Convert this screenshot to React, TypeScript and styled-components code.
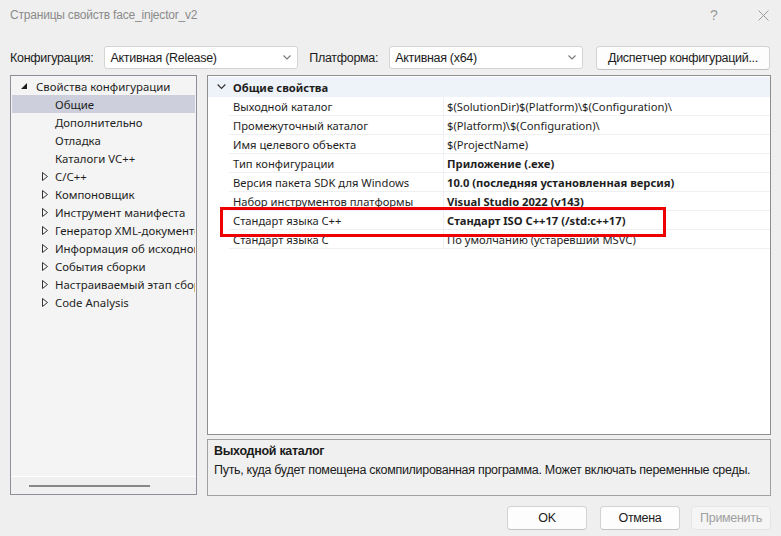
import React from 'react';
import styled, { createGlobalStyle } from 'styled-components';

const GlobalStyle = createGlobalStyle`
  html, body {
    margin: 0;
    padding: 0;
    background: #efefef;
  }
  * {
    box-sizing: border-box;
  }
`;

const uiFont = `"Liberation Sans", Arial, sans-serif`;
const gridFont = `"Noto Sans", "Open Sans", sans-serif`;

const Window = styled.div`
  width: 781px;
  height: 536px;
  display: flex;
  flex-direction: column;
  background: #efefef;
  font-family: ${uiFont};
  font-size: 12px;
  color: #1b1b1b;
  overflow: hidden;
`;

const TitleBar = styled.div`
  height: 30px;
  display: flex;
  align-items: center;
  padding: 0 0 0 10px;
  color: #8b8b8b;
  font-size: 12px;
`;

const TitleText = styled.div`
  flex: 1;
  letter-spacing: -0.2px;
`;

const TitleButton = styled.div<{ $w: number; $gap?: number }>`
  width: ${(p) => p.$w}px;
  margin-left: ${(p) => p.$gap ?? 0}px;
  height: 30px;
  display: flex;
  align-items: center;
  justify-content: center;
  color: #9a9a9a;
  font-size: 14px;
`;

const Toolbar = styled.div`
  display: flex;
  align-items: center;
  padding: 10px 11px 0 10px;
  height: 45px;
`;

const Label = styled.span`
  font-size: 12.5px;
  letter-spacing: -0.3px;
  margin-right: 11px;
`;

const Select = styled.div<{ $width: number }>`
  width: ${(p) => p.$width}px;
  height: 23px;
  display: flex;
  align-items: center;
  justify-content: space-between;
  padding: 0 6px 0 5px;
  background: #ffffff;
  border: 1px solid #d4d4d4;
  border-radius: 3px;
  font-size: 12.5px;
  letter-spacing: -0.3px;
  margin-right: 11px;
`;

const ToolButton = styled.button<{ $disabled?: boolean }>`
  height: 24px;
  padding: 0 10px;
  background: ${(p) => (p.$disabled ? '#f5f5f5' : '#fdfdfd')};
  border: 1px solid ${(p) => (p.$disabled ? '#e6e6e6' : '#d3d3d3')};
  border-bottom-color: ${(p) => (p.$disabled ? '#e6e6e6' : '#c2c2c2')};
  border-radius: 4px;
  font-family: ${uiFont};
  font-size: 12.5px;
  letter-spacing: -0.3px;
  color: ${(p) => (p.$disabled ? '#a0a0a0' : '#1b1b1b')};
`;

const Main = styled.div`
  display: flex;
  gap: 10px;
  padding: 0 10px 0 10px;
  height: 421px;
`;

const TreePanel = styled.div`
  width: 187px;
  height: 420px;
  display: flex;
  flex-direction: column;
  border: 1px solid #8e8e98;
  background: #f4f4f4;
  font-family: ${gridFont};
  font-size: 11.4px;
`;

const TreeList = styled.div`
  flex: 1;
  padding-top: 1px;
  overflow: hidden;
`;

const TreeRow = styled.div<{ $level: number; $selected?: boolean }>`
  height: 18px;
  display: flex;
  align-items: center;
  white-space: nowrap;
  overflow: hidden;
  padding-left: ${(p) => (p.$level === 0 ? 7 : 26)}px;
  margin: 0 1px;
  background: ${(p) => (p.$selected ? '#cdd0dc' : 'transparent')};
  color: #1e1e1e;
`;

const Expander = styled.span<{ $root?: boolean }>`
  width: 17px;
  height: 18px;
  display: flex;
  align-items: center;
  padding-left: ${(p) => (p.$root ? 2 : 4)}px;
  flex-shrink: 0;
`;

const ScrollBar = styled.div`
  height: 18px;
  border-top: 1px solid #ffffff;
  background: #f0f0f0;
  display: flex;
  align-items: center;
  padding-left: 18px;
`;

const ScrollThumb = styled.div`
  width: 121px;
  height: 2px;
  background: #888888;
`;

const RightColumn = styled.div`
  flex: 1;
  display: flex;
  flex-direction: column;
  gap: 4px;
`;

const Grid = styled.div`
  position: relative;
  height: 361px;
  border: 1px solid #8e8e8e;
  background: #ffffff;
  font-family: ${gridFont};
  font-size: 11.2px;
  padding-top: 1px;
`;

const GroupHeader = styled.div`
  height: 20px;
  display: flex;
  align-items: center;
  background: #eef3f9;
  font-weight: 700;
  color: #1e1e1e;
`;

const Chevron = styled.span`
  width: 25px;
  display: flex;
  justify-content: center;
  padding-left: 2px;
`;

const PropRow = styled.div`
  height: 19px;
  display: grid;
  grid-template-columns: 21px 214px 1fr;
  align-items: stretch;
`;

const Cell = styled.div<{ $bold?: boolean; $value?: boolean }>`
  display: flex;
  align-items: center;
  white-space: nowrap;
  overflow: hidden;
  padding-left: ${(p) => (p.$value ? 3 : 4)}px;
  border-bottom: 1px solid #f0f0f4;
  border-left: ${(p) => (p.$value ? '1px solid #f0f0f4' : 'none')};
  font-weight: ${(p) => (p.$bold ? 700 : 400)};
  color: #1e1e1e;
`;

const Highlight = styled.div`
  position: absolute;
  left: 12px;
  top: 131px;
  width: 446px;
  height: 30px;
  border: 3px solid #ee0000;
  pointer-events: none;
`;

const Description = styled.div`
  height: 57px;
  border: 1px solid #a0a0a0;
  background: #f0f0f0;
  padding: 2px 6px;
  font-size: 12.5px;
  letter-spacing: -0.3px;
  line-height: 18px;
`;

const DescTitle = styled.div`
  font-weight: 700;
  margin-bottom: 1px;
`;

const Footer = styled.div`
  display: flex;
  justify-content: flex-end;
  gap: 13px;
  padding: 10px 10px 0 0;
`;

const FooterButton = styled(ToolButton)`
  width: 80px;
  height: 24px;
  padding: 0;
  margin-left: ${(p) => (p.$disabled ? '-2px' : '0')};
`;

const FilledTriangle = () => (
  <svg width="7" height="7" viewBox="0 0 7 7">
    <polygon points="6,0 6,6 0,6" fill="#1e1e1e" />
  </svg>
);

const OpenTriangle = () => (
  <svg width="7" height="9" viewBox="0 0 7 9">
    <polygon points="0.5,0.5 5.5,4.5 0.5,8.5" fill="none" stroke="#333" strokeWidth="1" />
  </svg>
);

const DownChevron = ({ color = '#777', size = 8 }: { color?: string; size?: number }) => (
  <svg width={size} height={size / 2 + 1} viewBox="0 0 8 5">
    <polyline points="0.5,0.5 4,4 7.5,0.5" fill="none" stroke={color} strokeWidth="1.1" />
  </svg>
);

const treeItems: { label: string; level: number; expandable?: boolean; selected?: boolean }[] = [
  { label: 'Свойства конфигурации', level: 0 },
  { label: 'Общие', level: 1, selected: true },
  { label: 'Дополнительно', level: 1 },
  { label: 'Отладка', level: 1 },
  { label: 'Каталоги VC++', level: 1 },
  { label: 'C/C++', level: 1, expandable: true },
  { label: 'Компоновщик', level: 1, expandable: true },
  { label: 'Инструмент манифеста', level: 1, expandable: true },
  { label: 'Генератор XML-документов', level: 1, expandable: true },
  { label: 'Информация об исходном коде', level: 1, expandable: true },
  { label: 'События сборки', level: 1, expandable: true },
  { label: 'Настраиваемый этап сборки', level: 1, expandable: true },
  { label: 'Code Analysis', level: 1, expandable: true },
];

const properties: { name: string; value: string; bold?: boolean }[] = [
  { name: 'Выходной каталог', value: '$(SolutionDir)$(Platform)\\$(Configuration)\\' },
  { name: 'Промежуточный каталог', value: '$(Platform)\\$(Configuration)\\' },
  { name: 'Имя целевого объекта', value: '$(ProjectName)' },
  { name: 'Тип конфигурации', value: 'Приложение (.exe)', bold: true },
  { name: 'Версия пакета SDK для Windows', value: '10.0 (последняя установленная версия)', bold: true },
  { name: 'Набор инструментов платформы', value: 'Visual Studio 2022 (v143)', bold: true },
  { name: 'Стандарт языка C++', value: 'Стандарт ISO C++17 (/std:c++17)', bold: true },
  { name: 'Стандарт языка C', value: 'По умолчанию (устаревший MSVC)' },
];

export default function App() {
  return (
    <Window>
      <GlobalStyle />
      <TitleBar>
        <TitleText>Страницы свойств face_injector_v2</TitleText>
        <TitleButton $w={46}>?</TitleButton>
        <TitleButton $w={36} $gap={8}>
          <svg width="11" height="11" viewBox="0 0 11 11">
            <path d="M0.5 0.5 L10.5 10.5 M10.5 0.5 L0.5 10.5" stroke="#9a9a9a" strokeWidth="1" />
          </svg>
        </TitleButton>
      </TitleBar>

      <Toolbar>
        <Label>Конфигурация:</Label>
        <Select $width={195}>
          <span>Активная (Release)</span>
          <DownChevron />
        </Select>
        <Label>Платформа:</Label>
        <Select $width={195}>
          <span>Активная (x64)</span>
          <DownChevron />
        </Select>
        <ToolButton style={{ width: 175, marginLeft: 2 }}>Диспетчер конфигураций...</ToolButton>
      </Toolbar>

      <Main>
        <TreePanel>
          <TreeList>
            {treeItems.map((item) => (
              <TreeRow key={item.label} $level={item.level} $selected={item.selected}>
                <Expander $root={item.level === 0}>
                  {item.level === 0 ? <FilledTriangle /> : item.expandable ? <OpenTriangle /> : null}
                </Expander>
                <span>{item.label}</span>
              </TreeRow>
            ))}
          </TreeList>
          <ScrollBar>
            <ScrollThumb />
          </ScrollBar>
        </TreePanel>

        <RightColumn>
          <Grid>
            <GroupHeader>
              <Chevron>
                <DownChevron color="#333" size={9} />
              </Chevron>
              <span>Общие свойства</span>
            </GroupHeader>
            {properties.map((p) => (
              <PropRow key={p.name}>
                <div />
                <Cell>{p.name}</Cell>
                <Cell $value $bold={p.bold}>
                  {p.value}
                </Cell>
              </PropRow>
            ))}
            <Highlight />
          </Grid>
          <Description>
            <DescTitle>Выходной каталог</DescTitle>
            <div>Путь, куда будет помещена скомпилированная программа. Может включать переменные среды.</div>
          </Description>
        </RightColumn>
      </Main>

      <Footer>
        <FooterButton>OK</FooterButton>
        <FooterButton>Отмена</FooterButton>
        <FooterButton $disabled>Применить</FooterButton>
      </Footer>
    </Window>
  );
}
